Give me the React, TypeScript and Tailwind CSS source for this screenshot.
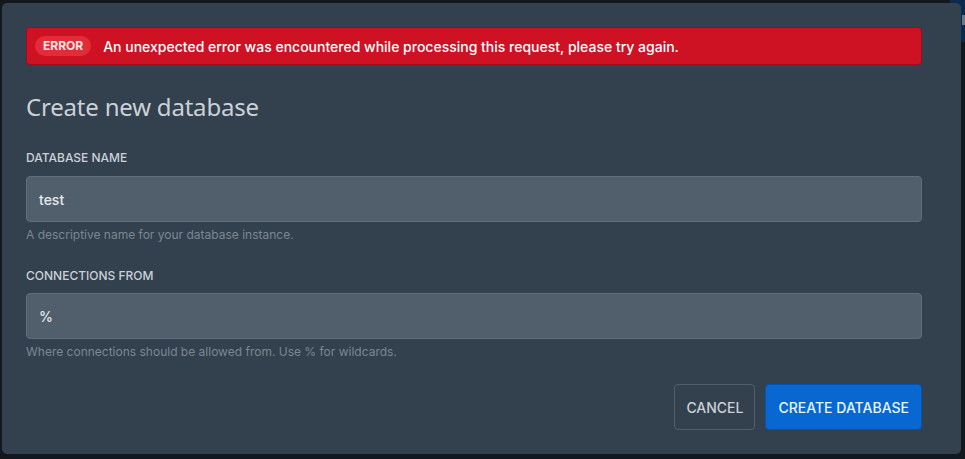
export default function App() {
  return (
    <div className="relative w-[965px] h-[459px] bg-[#12181e] overflow-hidden" style={{ fontFamily: 'Inter, "Noto Sans", sans-serif' }}>
      <div className="absolute right-0 top-0 w-[15px] h-[42px] bg-[#0b2a52]">
        <div className="absolute right-0 top-[15px] w-[3px] h-[10px] bg-[#6b7785]" />
      </div>
      <div className="absolute left-[2px] top-[3px] w-[959px] h-[451px] rounded-[5px] bg-[#33404d] pl-6 pr-[39px] pt-6 pb-6 flex flex-col">
        <div className="h-[38px] rounded-[4px] bg-[#cf1124] border border-[#a30a1c] flex items-center pl-[8px]">
          <span className="h-[20px] px-[8px] rounded-full bg-[#e12d39] text-[12px] font-bold text-[#ffe3e3] flex items-center">ERROR</span>
          <span className="ml-[12px] text-[14px] font-medium text-white">An unexpected error was encountered while processing this request, please try again.</span>
        </div>
        <h2 className="mt-[26px] text-[24px] leading-[32px] tracking-[-0.2px] text-[#cad1d8]" style={{ fontFamily: '"Noto Sans", sans-serif' }}>Create new database</h2>
        <label className="mt-[27px] text-[12px] leading-[16px] font-medium text-[#cad1d8] uppercase">Database Name</label>
        <div className="mt-[10px] h-[46px] rounded-[4px] bg-[#515f6c] border border-[#606d7b] flex items-center px-[12px] text-[14px] font-medium text-[#e5e8eb]">test</div>
        <p className="mt-[5px] text-[12px] leading-[16px] text-[#7b8793]">A descriptive name for your database instance.</p>
        <label className="mt-[25px] text-[12px] leading-[16px] font-medium text-[#cad1d8] uppercase">Connections From</label>
        <div className="mt-[9px] h-[46px] rounded-[4px] bg-[#515f6c] border border-[#606d7b] flex items-center px-[12px] text-[14px] font-medium text-[#e5e8eb]">%</div>
        <p className="mt-[5px] text-[12px] leading-[16px] text-[#7b8793]">Where connections should be allowed from. Use % for wildcards.</p>
        <div className="mt-auto flex justify-end gap-[10px]">
          <button className="h-[46px] px-[11px] rounded-[4px] border border-[#515f6c] text-[14px] font-medium text-[#cad1d8]">CANCEL</button>
          <button className="h-[46px] px-[12px] rounded-[4px] bg-[#0967d2] border border-[#0552b5] text-[14px] font-medium text-[#e6f6ff]">CREATE DATABASE</button>
        </div>
      </div>
    </div>
  );
}
